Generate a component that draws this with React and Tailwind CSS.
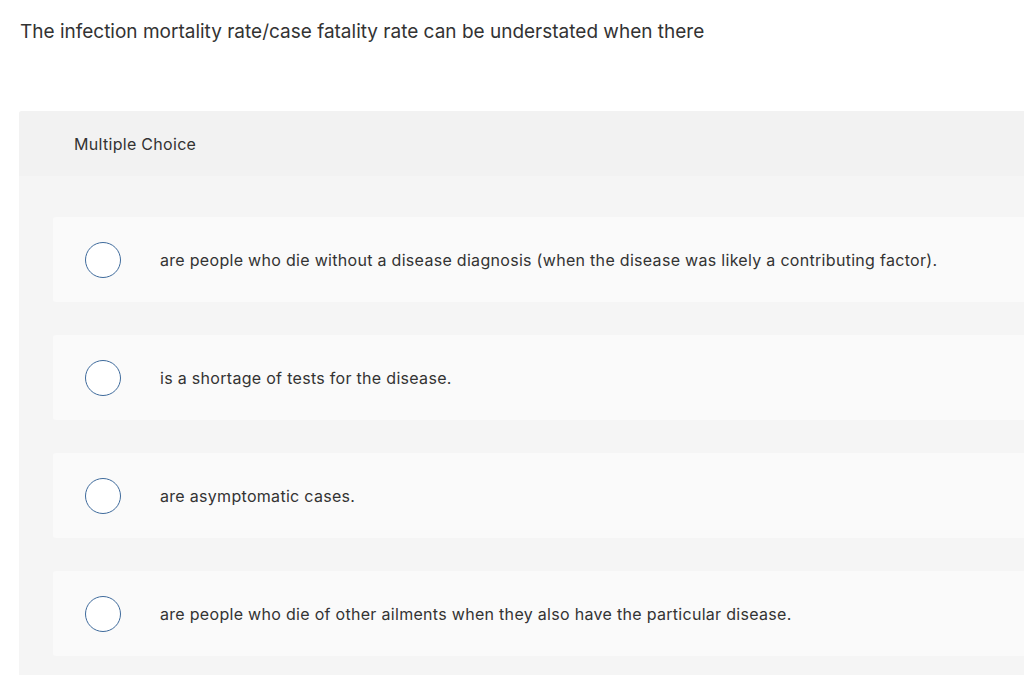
const options = [
  'are people who die without a disease diagnosis (when the disease was likely a contributing factor).',
  'is a shortage of tests for the disease.',
  'are asymptomatic cases.',
  'are people who die of other ailments when they also have the particular disease.',
]

export default function App() {
  return (
    <div className="h-[675px] w-[1024px] overflow-hidden bg-white font-['Inter',_sans-serif] text-[#333]">
      <div className="px-5 pt-[20px] text-[19px] leading-6">
        The infection mortality rate/case fatality rate can be understated when there
      </div>
      <div className="ml-[19px] mt-[67px] w-[1040px] rounded-tl-[3px] bg-[#f5f5f5]">
        <div className="flex h-[65px] items-center rounded-tl-[3px] bg-[#f2f2f2] pl-[55px] text-[16px] tracking-[0.3px]">
          Multiple Choice
        </div>
        <div className="flex flex-col gap-[33px] pl-[34px] pt-[41px] pb-5">
          {options.map((text) => (
            <div key={text} className="flex h-[85px] items-center rounded-[3px] bg-[#fafafa]">
              <div className="ml-[32px] h-[36px] w-[36px] shrink-0 rounded-full border-[1.5px] border-[#3f6b9c] bg-white" />
              <span className="ml-[39px] text-[16px] tracking-[0.3px]">{text}</span>
            </div>
          ))}
        </div>
      </div>
    </div>
  )
}
